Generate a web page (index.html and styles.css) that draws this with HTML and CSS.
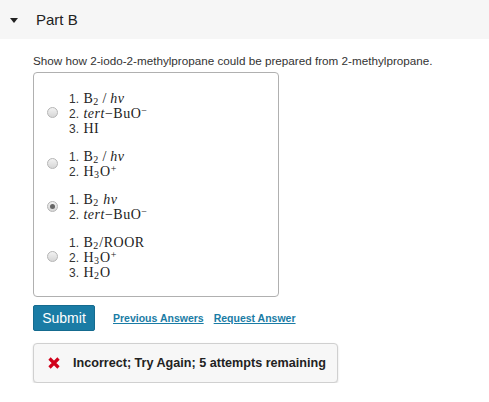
FILE: index.html
```html
<!DOCTYPE html>
<html>
<head>
<meta charset="utf-8">
<link rel="stylesheet" href="styles.css">
</head>
<body>
<div class="header">
  <span class="caret"></span>
  <span class="title">Part B</span>
</div>
<div class="content">
  <p class="question">Show how 2-iodo-2-methylpropane could be prepared from 2-methylpropane.</p>
  <div class="choices">
    <div class="option">
      <span class="radio"></span>
      <div class="steps">
        <div class="line"><span class="num">1.</span> <span class="m">B<sub>2</sub>&thinsp;/&thinsp;<i>hν</i></span></div>
        <div class="line"><span class="num">2.</span> <span class="m"><i>tert</i>−BuO<sup>−</sup></span></div>
        <div class="line"><span class="num">3.</span> <span class="m">HI</span></div>
      </div>
    </div>
    <div class="option">
      <span class="radio"></span>
      <div class="steps">
        <div class="line"><span class="num">1.</span> <span class="m">B<sub>2</sub>&thinsp;/&thinsp;<i>hν</i></span></div>
        <div class="line"><span class="num">2.</span> <span class="m">H<sub>3</sub>O<sup>+</sup></span></div>
      </div>
    </div>
    <div class="option">
      <span class="radio checked"></span>
      <div class="steps">
        <div class="line"><span class="num">1.</span> <span class="m">B<sub>2</sub> <i>hν</i></span></div>
        <div class="line"><span class="num">2.</span> <span class="m"><i>tert</i>−BuO<sup>−</sup></span></div>
      </div>
    </div>
    <div class="option">
      <span class="radio"></span>
      <div class="steps">
        <div class="line"><span class="num">1.</span> <span class="m">B<sub>2</sub>/ROOR</span></div>
        <div class="line"><span class="num">2.</span> <span class="m">H<sub>3</sub>O<sup>+</sup></span></div>
        <div class="line"><span class="num">3.</span> <span class="m">H<sub>2</sub>O</span></div>
      </div>
    </div>
  </div>
  <div class="actions">
    <button class="submit">Submit</button>
    <a class="link" href="#">Previous Answers</a>
    <a class="link" href="#">Request Answer</a>
  </div>
  <div class="feedback">
    <svg class="x" width="12" height="12" viewBox="0 0 12 12"><path d="M1.5 1.5 L10.5 10.5 M10.5 1.5 L1.5 10.5" stroke="#d0021b" stroke-width="3.2" stroke-linecap="butt"/></svg>
    <span class="msg">Incorrect; Try Again; 5 attempts remaining</span>
  </div>
</div>
</body>
</html>
```
FILE: styles.css
```css
html, body {
  margin: 0;
  padding: 0;
  background: #ffffff;
  font-family: "Liberation Sans", Arial, sans-serif;
  color: #333333;
}
.header {
  height: 39px;
  background: #f6f6f6;
  display: flex;
  align-items: center;
  padding-left: 10px;
}
.caret {
  width: 0;
  height: 0;
  border-left: 4px solid transparent;
  border-right: 4px solid transparent;
  border-top: 5px solid #222;
  margin-right: 18px;
  margin-top: 1px;
}
.title {
  font-size: 15px;
  color: #222;
}
.content {
  padding-left: 33px;
}
.question {
  margin: 14px 0 0 0;
  font-size: 11.7px;
  line-height: 16px;
  color: #333;
}
.choices {
  margin-top: 3px;
  width: 246px;
  height: 225px;
  box-sizing: border-box;
  border: 1px solid #b0b0b0;
  border-radius: 4px;
  display: flex;
  flex-direction: column;
  gap: 13px;
  padding-top: 17px;
}
.option {
  display: flex;
  align-items: center;
  padding-left: 13px;
}
.radio {
  width: 9px;
  height: 9px;
  border-radius: 50%;
  border: 1px solid #b5b5b5;
  background: linear-gradient(#f2f2f2, #d6d6d6);
  margin-right: 11px;
  position: relative;
  flex: none;
}
.radio.checked::after {
  content: "";
  position: absolute;
  left: 2px;
  top: 2px;
  width: 5px;
  height: 5px;
  border-radius: 50%;
  background: #666;
}
.steps {
  display: flex;
  flex-direction: column;
}
.line {
  height: 15px;
  line-height: 15px;
  white-space: nowrap;
}
.num {
  font-size: 12px;
  color: #333;
}
.m {
  font-family: "Liberation Serif", "Times New Roman", serif;
  font-size: 14px;
  line-height: 12px;
  letter-spacing: 0.5px;
  color: #222;
}
.m sub, .m sup {
  font-size: 10px;
  line-height: 0;
  letter-spacing: 0;
  margin-right: 1px;
}
.m sub { vertical-align: -2px; }
.m sup { vertical-align: 4px; }
.actions {
  display: flex;
  align-items: center;
  margin-top: 8px;
}
.submit {
  width: 62px;
  height: 26px;
  background: #1a7ca5;
  color: #ffffff;
  border: 1px solid #156b8f;
  border-radius: 2px;
  font-family: "Liberation Sans", Arial, sans-serif;
  font-size: 14px;
  padding: 0;
  margin-right: 18px;
}
.link {
  font-size: 10.5px;
  font-weight: bold;
  color: #1a7ca5;
  text-decoration: underline;
  margin-right: 10px;
}
.feedback {
  margin-top: 12px;
  width: 305px;
  height: 40px;
  box-sizing: border-box;
  border: 1px solid #d0d0d0;
  border-radius: 4px;
  background: #f7f7f7;
  box-shadow: 0 1px 2px rgba(0,0,0,0.15);
  display: flex;
  align-items: center;
  padding-left: 14px;
}
.x {
  margin-right: 13px;
  flex: none;
}
.msg {
  font-size: 12.6px;
  font-weight: bold;
  color: #222;
}
```
